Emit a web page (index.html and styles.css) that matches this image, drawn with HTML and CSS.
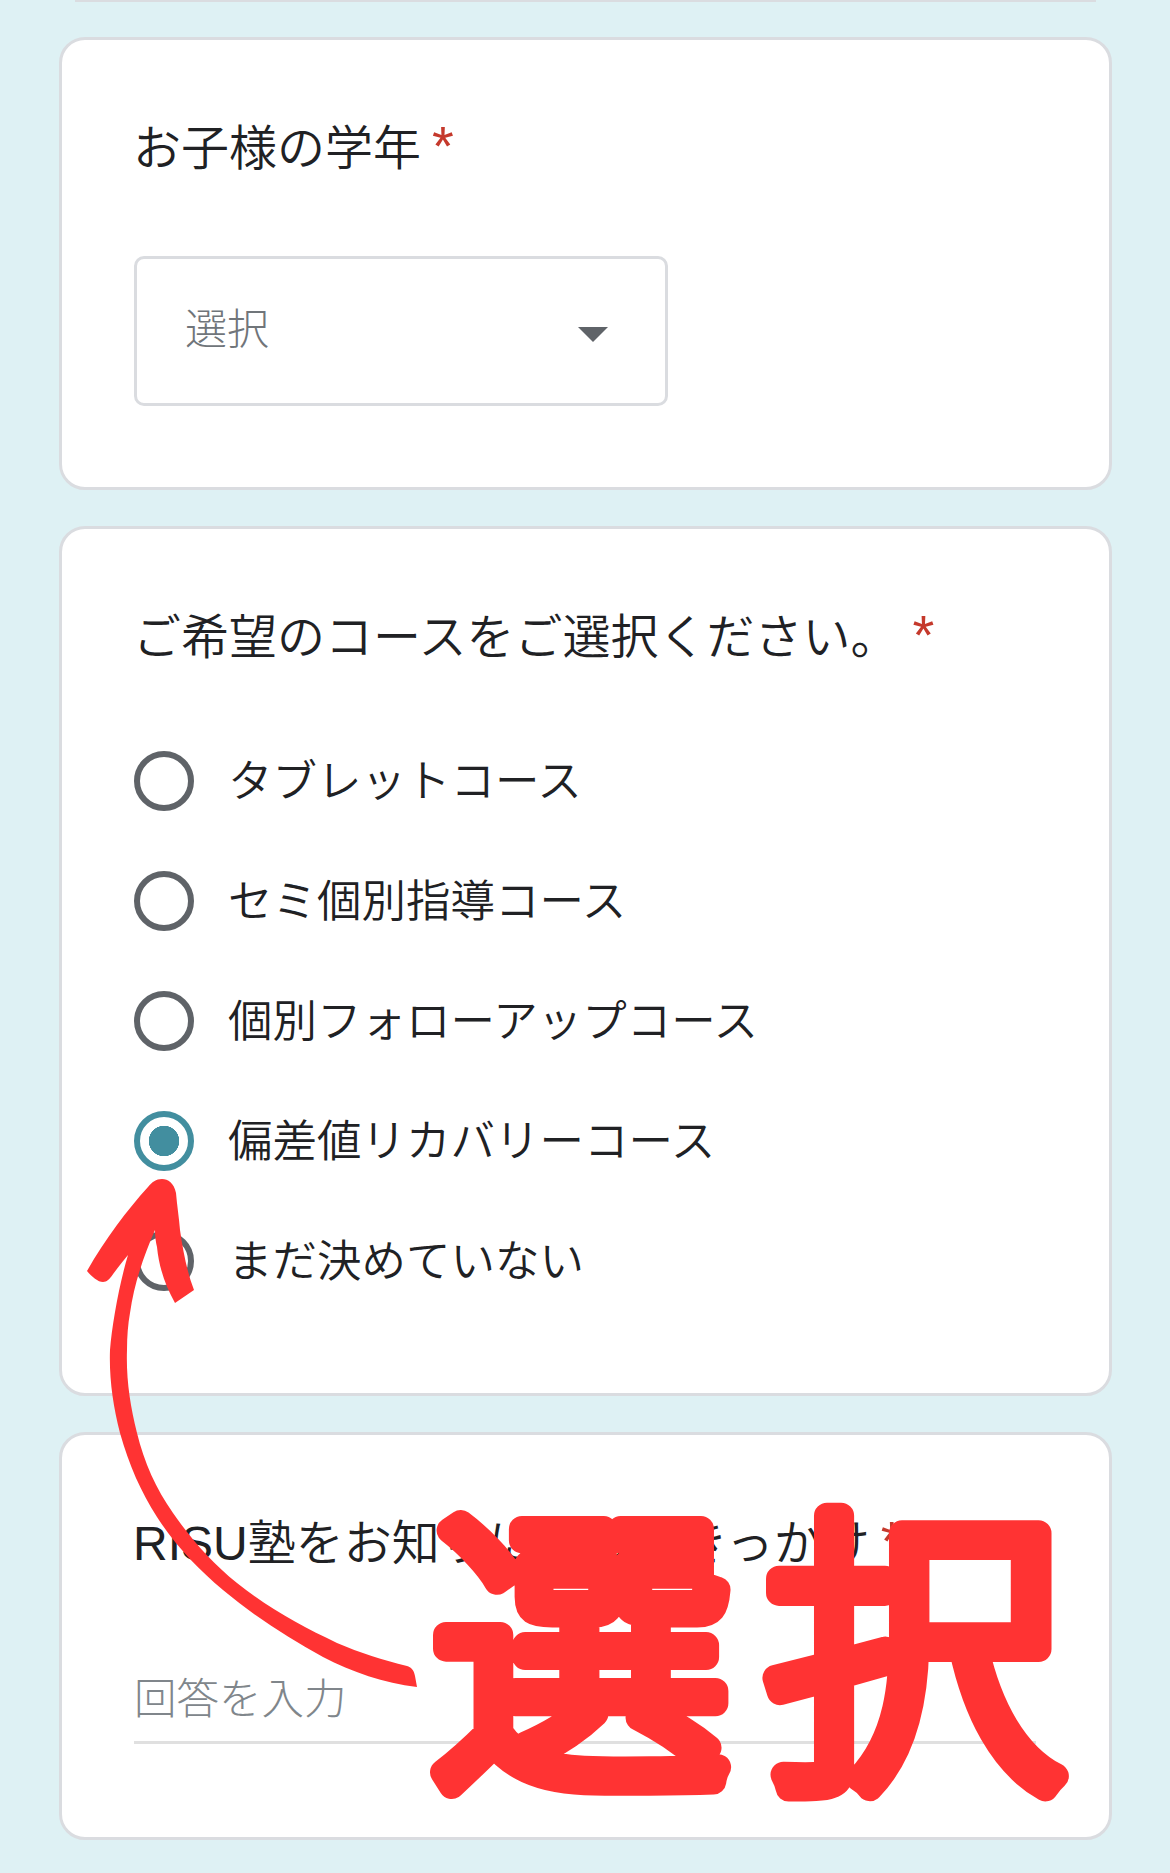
FILE: index.html
```html
<!DOCTYPE html>
<html lang="ja">
<head>
  <meta charset="UTF-8">
  <meta name="viewport" content="width=device-width, initial-scale=1.0">
  <title>RISU塾 お申し込みフォーム</title>
  <link rel="stylesheet" href="styles.css">
</head>
<body>
  <div class="card-end"></div>

  <section class="card card-grade">
    <div class="label">お子様の学年<span class="req req-tight">*</span></div>
    <div class="select">
      <span>選択</span>
      <span class="caret"></span>
    </div>
  </section>

  <section class="card card-course">
    <div class="label">ご希望のコースをご選択ください。<span class="req req-wide">*</span></div>
    <div class="options">
      <div class="option"><span class="radio"></span>タブレットコース</div>
      <div class="option"><span class="radio"></span>セミ個別指導コース</div>
      <div class="option"><span class="radio"></span>個別フォローアップコース</div>
      <div class="option"><span class="radio checked"></span>偏差値リカバリーコース</div>
      <div class="option"><span class="radio"></span>まだ決めていない</div>
    </div>
  </section>

  <section class="card card-source">
    <div class="label">RISU塾をお知りになったきっかけ<span class="req req-tight">*</span></div>
    <div class="input">回答を入力</div>
  </section>

  <!-- red annotation drawn over the form -->
  <svg class="annotation" width="1170" height="1873" viewBox="0 0 1170 1873">
    <path class="arrow" d="M110 1350 C109 1378 113 1406 120 1433 C129 1465 141 1492 157 1517 C175 1545 198 1569 223 1590 C254 1616 288 1638 323 1657 C352 1672 384 1683 417 1687 L415 1676 C414 1670 411 1667 407 1666 C383 1660 360 1653 337 1643 C303 1627 268 1608 237 1583 C212 1563 191 1539 173 1513 C156 1489 144 1462 137 1433 C130 1405 126 1378 127 1350 C127 1336 128 1324 130 1313 C134 1284 144 1255 155 1230 C155 1237 156 1243 157 1247 C159 1267 165 1285 175 1303 L194 1290 C187 1272 183 1251 180 1230 C179 1218 177 1205 176 1193 C174 1183 168 1179 162 1179 C156 1179 152 1182 148 1187 C128 1209 105 1239 87 1271 C92 1277 98 1282 103 1282 C107 1282 109 1279 111 1277 C116 1270 122 1262 128 1255 C119 1285 112 1325 110 1350 Z"/>
    <text class="big-word" x="431" y="1766">選択</text>
  </svg>
</body>
</html>
```

FILE: styles.css
```css
body {
  font-family: "Liberation Sans", "Noto Sans CJK JP", sans-serif;
  font-weight: 350;
  background: #def1f4;
  color: #202124;
  margin: 0;
  padding: 0 58px 33px 59px;
  position: relative;
  height: 1840px;
  overflow: hidden;
}
.card-end {
  height: 2px;
  margin: 0 16px 35px;
  background: #dadce0;
}
.card {
  background: white;
  border: 3px solid #dadce0;
  border-radius: 26px;
  padding: 78px 73px 81px;
  margin-bottom: 36px;
}
.label {
  font-size: 48px;
  line-height: 62px;
  margin-left: -2px;
}
.req {
  color: #c5392c;
  font-family: "Liberation Sans", sans-serif;
  font-size: 56px;
  font-weight: 400;
  line-height: 0;
}
.req-tight {
  margin-left: 11px;
}
.req-wide {
  margin-left: 14px;
}
.select {
  width: 534px;
  height: 150px;
  box-sizing: border-box;
  margin: 76px 0 0 -1px;
  padding: 0 57px 12px 48px;
  border: 3px solid #dadce0;
  border-radius: 10px;
  display: flex;
  justify-content: space-between;
  align-items: center;
  font-size: 42px;
  font-weight: 300;
  color: #70757a;
}
.caret {
  width: 0;
  height: 0;
  margin-top: 18px;
  border-left: 15px solid transparent;
  border-right: 15px solid transparent;
  border-top: 15px solid #5f6368;
}
.card-course {
  padding-top: 77px;
  padding-bottom: 72px;
}
.card-course .label {
  position: relative;
  top: 1px;
}
.options {
  margin: 53px 0 0 -1px;
}
.option {
  display: flex;
  align-items: center;
  gap: 34px;
  height: 120px;
  font-size: 44.5px;
  padding-bottom: 8px;
  box-sizing: border-box;
}
.radio {
  width: 60px;
  height: 60px;
  box-sizing: border-box;
  margin-top: 8px;
  border: 6px solid #5f6368;
  border-radius: 50%;
  flex-shrink: 0;
}
.radio.checked {
  border-color: #428e9f;
  background: radial-gradient(circle, #428e9f 15px, white 15.5px);
}
.card-source {
  padding-bottom: 93px;
  margin-bottom: 0;
}
.input {
  margin: 88px 0 0 -1px;
  height: 70px;
  line-height: 74px;
  padding-bottom: 8px;
  border-bottom: 3px solid #e0e0e0;
  font-size: 42.5px;
  font-weight: 300;
  color: #80868b;
}
.annotation {
  position: absolute;
  top: 0;
  left: 0;
}
.arrow {
  fill: #ff3333;
}
.big-word {
  font-family: "Noto Sans CJK JP", sans-serif;
  font-size: 300px;
  font-weight: 300;
  letter-spacing: 33px;
  fill: #ff3333;
  stroke: #ff3333;
  stroke-width: 26px;
  stroke-linejoin: round;
  stroke-linecap: round;
}
```
